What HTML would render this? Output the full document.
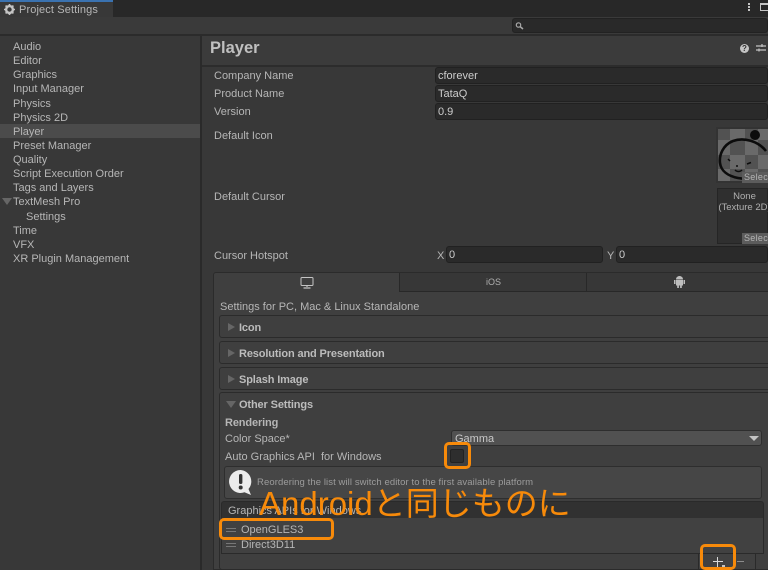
<!DOCTYPE html>
<html><head><meta charset="utf-8">
<style>
html,body{margin:0;padding:0;background:#383838;}
#r{position:relative;width:768px;height:570px;overflow:hidden;background:#383838;font-family:"Liberation Sans",sans-serif;font-size:11px;color:#b6b6b6;}
#r div{position:absolute;box-sizing:border-box;white-space:nowrap;}
.t{line-height:14px;height:14px;margin-top:1px;}
.f{background:#2a2a2a;border:1px solid #212121;border-radius:3px;height:17px;line-height:17px;padding-left:2px;color:#cdcdcd;}
.fold{left:219px;width:552px;height:23px;background:#3f3f3f;border:1px solid #2b2b2b;border-radius:3px;}
.b{font-weight:bold;color:#bcbcbc;letter-spacing:-.13px;}
.tri{width:0;height:0;border-top:4px solid transparent;border-bottom:4px solid transparent;border-left:7px solid #666;}
.trd{width:0;height:0;border-left:5px solid transparent;border-right:5px solid transparent;border-top:7px solid #666;}
.o{border:3px solid #f78a0a;border-radius:5px;}
</style></head><body><div id="r">

<div style="left:0;top:0;width:768px;height:17px;background:#282828"></div>
<div style="left:0;top:0;width:113px;height:17px;background:#383838"></div>
<div style="left:0;top:0;width:113px;height:2px;background:#3a72b0"></div>
<svg style="position:absolute;left:4px;top:4px" width="11" height="11" viewBox="0 0 11 11"><circle cx="5.500" cy="5.500" r="3.400" fill="none" stroke="#c4c4c4" stroke-width="2.400"/><path d="M5.500 0v2M5.500 9v2M0 5.500h2M9 5.500h2M1.600 1.600l1.400 1.400M8 8l1.400 1.400M1.600 9.400L3 8M8 3l1.400-1.400" stroke="#c4c4c4" stroke-width="1.600"/></svg>
<div class="t" style="left:19px;top:2px;letter-spacing:.12px">Project Settings</div>
<div style="left:748px;top:3px;width:2px;height:2px;background:#c4c4c4"></div>
<div style="left:748px;top:6px;width:2px;height:2px;background:#c4c4c4"></div>
<div style="left:748px;top:9px;width:2px;height:2px;background:#c4c4c4"></div>
<div style="left:760px;top:3px;width:8px;height:8px;border:1px solid #c4c4c4;border-top-width:2px;border-right:0"></div>

<div style="left:0;top:17px;width:768px;height:18px;background:#3a3a3a"></div>
<div style="left:0;top:34px;width:768px;height:2px;background:#2b2b2b"></div>
<div style="left:512px;top:18px;width:256px;height:15px;background:#292929;border:1px solid #222;border-radius:3px"></div>
<svg style="position:absolute;left:515px;top:22px" width="9" height="8" viewBox="0 0 9 8"><circle cx="3.500" cy="3" r="2.200" fill="none" stroke="#a8a8a8" stroke-width="1.200"/><path d="M5 4.500L8 7" stroke="#a8a8a8" stroke-width="1.500"/></svg>

<div style="left:200px;top:36px;width:2px;height:534px;background:#2a2a2a"></div>
<div style="left:0;top:124px;width:200px;height:14px;background:#4b4b4b"></div>
<div class="t" style="left:13px;top:39px">Audio</div>
<div class="t" style="left:13px;top:53px">Editor</div>
<div class="t" style="left:13px;top:67px">Graphics</div>
<div class="t" style="left:13px;top:81px">Input Manager</div>
<div class="t" style="left:13px;top:96px">Physics</div>
<div class="t" style="left:13px;top:110px">Physics 2D</div>
<div class="t" style="left:13px;top:124px">Player</div>
<div class="t" style="left:13px;top:138px">Preset Manager</div>
<div class="t" style="left:13px;top:152px">Quality</div>
<div class="t" style="left:13px;top:166px">Script Execution Order</div>
<div class="t" style="left:13px;top:180px">Tags and Layers</div>
<div class="trd" style="left:2px;top:198px"></div>
<div class="t" style="left:13px;top:194px">TextMesh Pro</div>
<div class="t" style="left:26px;top:209px">Settings</div>
<div class="t" style="left:13px;top:223px">Time</div>
<div class="t" style="left:13px;top:237px">VFX</div>
<div class="t" style="left:13px;top:251px">XR Plugin Management</div>

<div style="left:202px;top:36px;width:566px;height:30px;background:#3b3b3b"></div>
<div style="left:202px;top:65px;width:566px;height:2px;background:#2c2c2c"></div>
<div style="left:210px;top:37px;font-size:16.500px;font-weight:bold;line-height:20px;color:#c0c0c0;margin-top:1px">Player</div>
<div style="left:740px;top:44px;width:9px;height:9px;border-radius:50%;background:#c4c4c4;color:#333;font-size:8px;font-weight:bold;line-height:9px;text-align:center">?</div>
<svg style="position:absolute;left:756px;top:43px" width="10" height="10" viewBox="0 0 10 10"><path d="M0 3h10M0 7h10M6 1v3M3 5.500v3" stroke="#c4c4c4" stroke-width="1.200"/></svg>

<div class="t" style="left:214px;top:68px">Company Name</div>
<div class="t" style="left:214px;top:86px">Product Name</div>
<div class="t" style="left:214px;top:104px">Version</div>
<div class="f" style="left:435px;top:67px;width:333px">cforever</div>
<div class="f" style="left:435px;top:85px;width:333px">TataQ</div>
<div class="f" style="left:435px;top:103px;width:333px">0.9</div>

<div class="t" style="left:214px;top:128px">Default Icon</div>
<div class="t" style="left:214px;top:189px">Default Cursor</div>
<div style="left:716px;top:127px;width:52px;height:56px;background:#333;overflow:hidden">
<svg style="position:absolute;left:2px;top:2px" width="50" height="52" viewBox="0 0 50 52">
<rect width="50" height="52" fill="#6a6a6a"/>
<rect x="0" y="0" width="12" height="11" fill="#525252"/><rect x="27" y="0" width="13" height="11" fill="#525252"/>
<rect x="12" y="11" width="15" height="15" fill="#525252"/><rect x="40" y="11" width="10" height="15" fill="#525252"/>
<rect x="0" y="26" width="12" height="14" fill="#525252"/><rect x="27" y="26" width="13" height="14" fill="#525252"/>
<rect x="12" y="40" width="15" height="12" fill="#525252"/><rect x="40" y="40" width="10" height="12" fill="#525252"/>
<circle cx="37" cy="6" r="5" fill="#0c0c0c"/>
<path d="M48 22C40 12 26 8 15 12C5 16 1 26 2 34C3 42 10 47 20 49C28 50.500 36 50 42 48" fill="none" stroke="#0c0c0c" stroke-width="2.600"/>
<path d="M10 30l2 2M29 35l4-1.500M19 36v2M17 41c2 2 5 2 7 0" fill="none" stroke="#0c0c0c" stroke-width="1.500"/>
</svg></div>
<div style="left:742px;top:172px;width:26px;height:11px;background:#5c5c5c;color:#b4b4b4;font-size:9px;line-height:11px;padding-left:2px;letter-spacing:.3px">Select</div>
<div style="left:717px;top:188px;width:51px;height:56px;background:#2f2f2f;border:1px solid #252525"></div>
<div style="left:717px;top:191px;width:55px;height:24px;color:#b0b0b0;font-size:9.500px;line-height:11px;text-align:center;white-space:normal">None<br>(Texture 2D)</div>
<div style="left:742px;top:233px;width:26px;height:11px;background:#5c5c5c;color:#b4b4b4;font-size:9px;line-height:11px;padding-left:2px;letter-spacing:.3px">Select</div>

<div class="t" style="left:214px;top:248px">Cursor Hotspot</div>
<div class="t" style="left:437px;top:248px">X</div>
<div class="f" style="left:446px;top:246px;width:157px;">0</div>
<div class="t" style="left:607px;top:248px">Y</div>
<div class="f" style="left:616px;top:246px;width:152px">0</div>

<div style="left:213px;top:272px;width:558px;height:298px;background:#3f3f3f;border:1px solid #2b2b2b;border-radius:3px 0 0 0"></div>
<div style="left:400px;top:273px;width:368px;height:19px;background:#373737;border-bottom:1px solid #282828"></div>
<div style="left:399px;top:273px;width:1px;height:19px;background:#282828"></div>
<div style="left:586px;top:273px;width:1px;height:19px;background:#282828"></div>
<svg style="position:absolute;left:300px;top:277px" width="14" height="12" viewBox="0 0 14 12"><rect x="1" y=".5" width="12" height="8" rx="1" fill="none" stroke="#c4c4c4"/><path d="M7 9v1M3.500 11h7" stroke="#c4c4c4" stroke-width="1.200"/></svg>
<div class="t" style="left:486px;top:274px;font-size:9px;color:#b0b0b0">iOS</div>
<svg style="position:absolute;left:674px;top:275px" width="11" height="13" viewBox="0 0 11 13"><path d="M2 4.500C2 2 4 1 5.500 1S9 2 9 4.500z" fill="#bdbdbd"/><rect x="2" y="5" width="7" height="5.500" fill="#bdbdbd"/><rect x="0" y="5" width="1.500" height="4" fill="#bdbdbd"/><rect x="9.500" y="5" width="1.500" height="4" fill="#bdbdbd"/><rect x="3.200" y="10" width="1.700" height="3" fill="#bdbdbd"/><rect x="6.100" y="10" width="1.700" height="3" fill="#bdbdbd"/></svg>

<div class="t" style="left:220px;top:299px">Settings for PC, Mac &amp; Linux Standalone</div>

<div class="fold" style="top:315px"></div>
<div class="tri" style="left:228px;top:323px"></div>
<div class="t b" style="left:239px;top:320px">Icon</div>
<div class="fold" style="top:341px"></div>
<div class="tri" style="left:228px;top:349px"></div>
<div class="t b" style="left:239px;top:346px">Resolution and Presentation</div>
<div class="fold" style="top:367px"></div>
<div class="tri" style="left:228px;top:375px"></div>
<div class="t b" style="left:239px;top:372px">Splash Image</div>
<div class="fold" style="top:392px;height:178px"></div>
<div class="trd" style="left:226px;top:401px"></div>
<div class="t b" style="left:239px;top:397px">Other Settings</div>
<div class="t b" style="left:225px;top:415px;color:#b6b6b6">Rendering</div>
<div class="t" style="left:225px;top:431px">Color Space*</div>
<div style="left:451px;top:430px;width:311px;height:16px;background:#515151;border:1px solid #2e2e2e;border-radius:3px;color:#c8c8c8;line-height:16px;padding-left:3px">Gamma</div>
<div style="left:749px;top:436px;width:0;height:0;border-left:5px solid transparent;border-right:5px solid transparent;border-top:5px solid #c4c4c4"></div>
<div class="t" style="left:225px;top:449px">Auto Graphics API&nbsp; for Windows</div>
<div style="left:450px;top:449px;width:14px;height:14px;background:#2e2e2e;border:1px solid #222;border-radius:2px"></div>

<div style="left:224px;top:466px;width:538px;height:33px;background:#464646;border:1px solid #2e2e2e;border-radius:3px"></div>
<svg style="position:absolute;left:228px;top:469px" width="26" height="27" viewBox="0 0 26 27"><path d="M12.500 1a11.500 11.500 0 1 0 4 22.300L23 26l-2.500-6A11.500 11.500 0 0 0 12.500 1z" fill="#ececec"/><rect x="11" y="5" width="3.400" height="10" rx="1.500" fill="#333"/><circle cx="12.700" cy="18.500" r="2" fill="#333"/></svg>
<div style="left:257px;top:476px;font-size:9.500px;line-height:13px;color:#9c9c9c;letter-spacing:.09px">Reordering the list will switch editor to the first available platform</div>

<div style="left:221px;top:501px;width:543px;height:18px;background:#313131;border:1px solid #2a2a2a;border-radius:3px 3px 0 0"></div>
<div class="t" style="left:228px;top:503px">Graphics APIs for Windows</div>
<div style="left:221px;top:518px;width:543px;height:36px;background:#414141;border:1px solid #2a2a2a;border-top:0"></div>
<div style="left:226px;top:528px;width:10px;height:1px;background:#777"></div>
<div style="left:226px;top:531px;width:10px;height:1px;background:#777"></div>
<div class="t" style="left:241px;top:522px">OpenGLES3</div>
<div style="left:226px;top:543px;width:10px;height:1px;background:#777"></div>
<div style="left:226px;top:546px;width:10px;height:1px;background:#777"></div>
<div class="t" style="left:241px;top:537px">Direct3D11</div>

<div style="left:698px;top:554px;width:58px;height:16px;background:#414141;border:1px solid #2a2a2a;border-top:0;"></div>
<div style="left:713px;top:561px;width:10px;height:1px;background:#d8d8d8"></div>
<div style="left:717px;top:557px;width:1px;height:10px;background:#d8d8d8"></div>
<div style="left:722px;top:565px;width:3px;height:2px;background:#c4c4c4"></div>
<div style="left:737px;top:561px;width:7px;height:1px;background:#8c8c8c"></div>

<div class="o" style="left:444px;top:442px;width:27px;height:27px"></div>
<div class="o" style="left:219px;top:518px;width:115px;height:22px"></div>
<div class="o" style="left:700px;top:544px;width:36px;height:26px"></div>
<div style="left:259px;top:484px;font-family:'Liberation Sans','Noto Sans CJK JP',sans-serif;font-size:33px;line-height:40px;color:#f78a0a;">Androidと同じものに</div>

</div></body></html>
